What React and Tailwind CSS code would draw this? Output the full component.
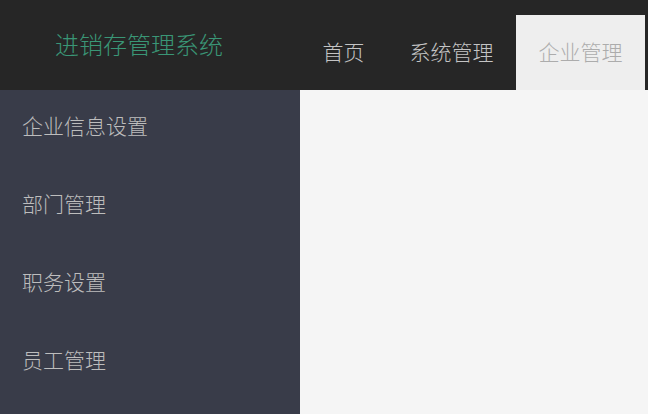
export default function App() {
  const nav = ["首页", "系统管理"];
  const side = ["企业信息设置", "部门管理", "职务设置", "员工管理"];
  return (
    <div
      className="w-[648px] h-[414px] overflow-hidden flex flex-col bg-[#f5f5f5] font-light"
      style={{ fontFamily: '"Noto Sans CJK SC", "Noto Sans", sans-serif' }}
    >
      <div className="h-[90px] shrink-0 bg-[#262626] flex">
        <div className="w-[300px] flex items-center pl-[55px] pb-[2px] text-[24px] text-[#3a9676] leading-none">
          进销存管理系统
        </div>
        <div className="flex items-end">
          {nav.map((n) => (
            <div
              key={n}
              className="h-[75px] px-[22.5px] flex items-center text-[21px] text-[#c4c4c4] leading-none pb-[2px]"
            >
              {n}
            </div>
          ))}
          <div className="h-[75px] px-[22.5px] flex items-center text-[21px] text-[#acacac] bg-[#eeeeee] leading-none pb-[2px]">
            企业管理
          </div>
        </div>
      </div>
      <div className="flex flex-1">
        <div className="w-[300px] bg-[#393c49] flex flex-col">
          {side.map((s) => (
            <div
              key={s}
              className="h-[78px] px-[22px] flex items-center text-[21px] text-[#bdbdbd] leading-none pb-[8px]"
            >
              {s}
            </div>
          ))}
        </div>
        <div className="flex-1 bg-[#f5f5f5]" />
      </div>
    </div>
  );
}
